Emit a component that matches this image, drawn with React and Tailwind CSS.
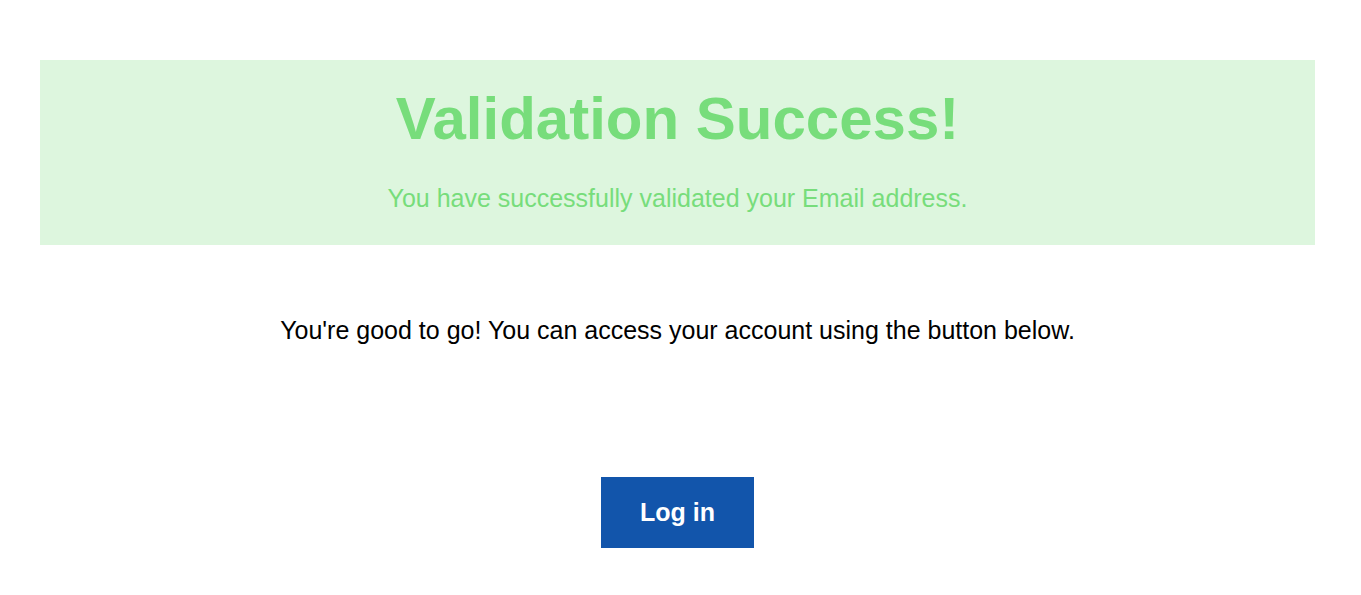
export default function App() {
  return (
    <div className="min-h-[595px] bg-white pt-[60px] font-['Liberation_Sans',Arial,sans-serif]">
      <div className="w-[1355px]">
        {/* Success banner */}
        <div className="ml-[40px] w-[1275px] h-[185px] bg-[#ddf6de] flex flex-col items-center">
          <h1 className="mt-[24px] text-[60px] leading-[70px] font-bold text-[#77dd7b]">Validation Success!</h1>
          <p className="mt-[30px] text-[25px] leading-[28px] text-[#77dd7b]">You have successfully validated your Email address.</p>
        </div>

        <p className="mt-[71px] text-center text-[25px] leading-[28px] text-black">
          You're good to go! You can access your account using the button below.
        </p>

        <div className="mt-[133px] flex justify-center">
          <button className="w-[153px] h-[71px] bg-[#1255ab] text-white text-[25px] font-bold">Log in</button>
        </div>
      </div>
    </div>
  );
}
